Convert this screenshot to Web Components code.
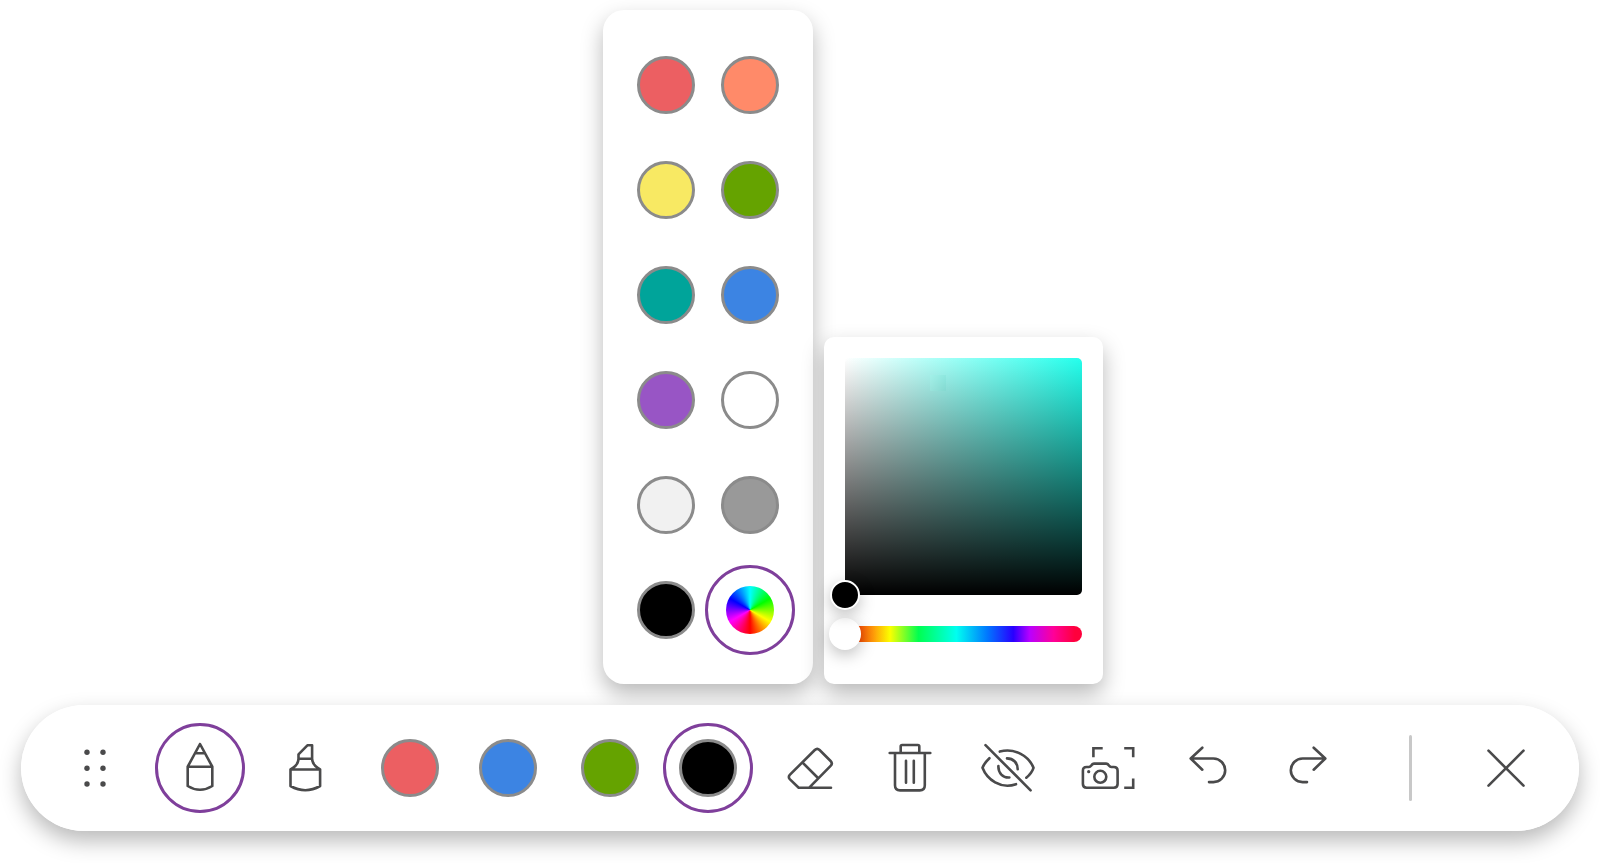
<!DOCTYPE html>
<html lang="en">
<head>
<meta charset="utf-8">
<title>Ink toolbar</title>
<style>
    body {
        margin: 0;
        background: #fff;
        font-family: "Liberation Sans", sans-serif;
    }
</style>
</head>
<body>
<ink-app></ink-app>

<script>
const ICONS = {
    grip: `<g fill="currentColor" stroke="none">
        <circle cx="-8" cy="-15.7" r="2.7"/><circle cx="8" cy="-15.7" r="2.7"/>
        <circle cx="-8" cy="0.2" r="2.7"/><circle cx="8" cy="0.2" r="2.7"/>
        <circle cx="-8" cy="16" r="2.7"/><circle cx="8" cy="16" r="2.7"/></g>`,
    pen: '<path d="M0-24L-12.3-1.3V18Q0 25.6 12.3 18V-1.3ZM-12.3-1.3H12.3M-4.7-14.8H4.7"/>',
    marker: '<path d="M-6.5-9.2V-13.7L2.4-22.7H7.1V-9.2ZM-6.5-9.2C-6.5-5-9-1.5-14.5 1.3V18Q0.3 26.4 15.1 18V1.3C10 -1.5 7.1-5 7.1-9.2M-14.5 1.5H15.1"/>',
    eraser: '<path d="M21 19.7H-11.3L-20 11.4Q-22.4 9-20 6.6L4.8-18Q7.2-20.3 9.6-18L20.6-7Q23-4.6 20.6-2.2L-.5 19.4M-7.2-5.2L8 10"/>',
    trash: '<path d="M-20.3-15H20.3M-9.3-15.5V-21.5Q-9.3-23-7.8-23H7.8Q9.3-23 9.3-21.5V-15.5M-15-14.5V17.3Q-15 22.4-10 22.4H9.8Q14.8 22.4 14.8 17.3V-14.5M-4-7.3V14.7M3.8-7.3V14.7"/>',
    hide: `<path d="M-22.5-22.8L22.6 22.3M-8.2-16.4C7-20.5 21-11.5 25.5-.2C24.5 3 21.5 7 18.3 9.7
        M-18.6-9.8C-22-6.5-24.5-3-25.5-.2C-21 11.5-7.5 21.5 8 16.2M-1-9.6C5.5-9.6 9.7-5 9.7 1.2M-9.6-2C-10 5 -5 10 1.4 9.5"/>`,
    capture: `<path stroke-linecap="butt" stroke-linejoin="miter" d="M-14.6-10.7V-19.8H-5.3M16.2-19.8H25.2V-10.7M25.2 10.6V19.7H16.2"/>
        <path d="M-21.3-1H-19Q-17.8-1-17-2.2Q-15.8-4.4-14-4.4H-1.8Q0-4.4 1.2-2.2Q2-1 3.2-1H5.8Q9.6-1 9.6 2.8V16Q9.6 19.7 5.8 19.7H-21.3Q-25.1 19.7-25.1 16V2.8Q-25.1-1-21.3-1Z"/>
        <circle cx="-7.7" cy="8.8" r="6"/><circle cx="-19.3" cy="3.7" r="1.6" fill="currentColor" stroke="none"/>`,
    undo: '<path d="M-5.7-20.3L-17.3-9.5L-5.7 1.7M-17-9.5H5.4A11.8 11.8 0 0 1 5.4 14.1H1"/>',
    redo: '<path d="M5.7-20.3L17.3-9.5L5.7 1.7M17-9.5H-5.4A11.8 11.8 0 0 0-5.4 14.1H-1"/>',
    close: '<path d="M-17.5-17.3L17.5 17.7M17.5-17.3L-17.5 17.7"/>'
};

class InkApp extends HTMLElement {
    constructor() {
        super();
        this.attachShadow({ mode: 'open' });
        this.shadowRoot.innerHTML = `
            <style>
                :host {
                    display: flex;
                    flex-direction: column;
                    gap: 21px;
                    padding: 10px 21px 32px;
                    --ink: #4a4a4b;
                    --accent: #7f3f9b;
                    --outline: #8b8b8b;
                    --shadow: 0 10px 22px rgba(0,0,0,0.28);
                }
                .popups {
                    display: flex;
                    align-items: flex-end;
                    gap: 11px;
                    padding-left: 582px;
                }
            </style>
            <div class="popups">
                <ink-palette></ink-palette>
                <ink-picker></ink-picker>
            </div>
            <ink-toolbar>
                <ink-group class="wide">
                    <ink-icon name="grip" label="Move toolbar"></ink-icon>
                    <ink-icon name="pen" label="Pen" selected></ink-icon>
                    <ink-icon name="marker" label="Highlighter"></ink-icon>
                </ink-group>
                <ink-group class="pens">
                    <ink-group>
                        <ink-swatch color="#ec5f62" label="Red"></ink-swatch>
                        <ink-swatch color="#3c84e3" label="Blue"></ink-swatch>
                    </ink-group>
                    <ink-group>
                        <ink-swatch color="#65a300" label="Green"></ink-swatch>
                        <ink-swatch color="#000" label="Black" selected></ink-swatch>
                    </ink-group>
                </ink-group>
                <ink-group class="actions">
                    <ink-icon name="eraser" label="Eraser"></ink-icon>
                    <ink-group>
                        <ink-icon name="trash" label="Delete all"></ink-icon>
                        <ink-icon name="hide" label="Hide ink"></ink-icon>
                    </ink-group>
                    <ink-icon name="capture" label="Capture"></ink-icon>
                    <ink-icon name="undo" label="Undo"></ink-icon>
                    <ink-icon name="redo" label="Redo"></ink-icon>
                </ink-group>
                <ink-group class="wide" slot="end">
                    <ink-icon name="close" label="Close"></ink-icon>
                </ink-group>
            </ink-toolbar>
        `;
    }
}

class InkToolbar extends HTMLElement {
    constructor() {
        super();
        this.attachShadow({ mode: 'open' });
        this.shadowRoot.innerHTML = `
            <style>
                :host {
                    display: flex;
                    align-items: center;
                    gap: 4px;
                    min-height: 126px;
                    padding: 0 21px;
                    border-radius: 63px;
                    background: rgba(255,255,255,0.93);
                    box-shadow: var(--shadow);
                    position: relative;
                }
                .end {
                    display: flex;
                    align-items: center;
                    gap: 41px;
                    margin-left: auto;
                }
                .divider {
                    width: 3px;
                    height: 66px;
                    border-radius: 2px;
                    background: #c8c8c8;
                }
            </style>
            <slot></slot>
            <div class="end">
                <div class="divider"></div>
                <slot name="end"></slot>
            </div>
        `;
    }
}

class InkGroup extends HTMLElement {
    constructor() {
        super();
        this.attachShadow({ mode: 'open' });
        this.shadowRoot.innerHTML = `
            <style>
                :host {
                    display: flex;
                    align-items: center;
                }
                :host(.wide) { --cell: 105px; }
                :host(.pens) { gap: 4px; }
                :host(.actions) { gap: 2px; }
            </style>
            <slot></slot>
        `;
    }
}

// shared by icon buttons and colour swatches
const BUTTON_STYLE = `
    :host {
        display: flex;
        justify-content: center;
        align-items: center;
        width: var(--cell, 98px);
    }
    button {
        display: flex;
        flex: none;
        justify-content: center;
        align-items: center;
        box-sizing: border-box;
        width: 90px;
        height: 90px;
        margin: 0 -3px;
        padding: 0;
        border: 3px solid transparent;
        border-radius: 50%;
        background: none;
        color: var(--ink);
        cursor: pointer;
    }
    :host([selected]) button {
        border-color: var(--accent);
    }
`;

class InkIcon extends HTMLElement {
    constructor() {
        super();
        this.attachShadow({ mode: 'open' });
    }

    connectedCallback() {
        this.shadowRoot.innerHTML = `
            <style>
                ${BUTTON_STYLE}
                svg {
                    width: 54px;
                    height: 54px;
                    fill: none;
                    stroke: currentColor;
                    stroke-width: 2.6;
                    stroke-linecap: round;
                    stroke-linejoin: round;
                }
            </style>
            <button type="button" aria-label="${this.getAttribute('label')}">
                <svg viewBox="-27 -27 54 54" aria-hidden="true">${ICONS[this.getAttribute('name')]}</svg>
            </button>
        `;
    }
}

class InkSwatch extends HTMLElement {
    constructor() {
        super();
        this.attachShadow({ mode: 'open' });
    }

    connectedCallback() {
        this.shadowRoot.innerHTML = `
            <style>
                ${BUTTON_STYLE}
                span {
                    box-sizing: border-box;
                    width: 58px;
                    height: 58px;
                    border: 3px solid var(--outline);
                    border-radius: 50%;
                    background: ${this.getAttribute('color')};
                }
                :host([custom]) span {
                    width: 48px;
                    height: 48px;
                    border: 0;
                    background: conic-gradient(#0ff, #0f0 60deg, #ff0 120deg, #f00 180deg, #f0f 240deg, #00f 300deg, #0ff);
                }
            </style>
            <button type="button" aria-label="${this.getAttribute('label')}"><span></span></button>
        `;
    }
}

class InkPalette extends HTMLElement {
    constructor() {
        super();
        this.attachShadow({ mode: 'open' });
        this.shadowRoot.innerHTML = `
            <style>
                :host {
                    display: grid;
                    grid-template-columns: 84px 84px;
                    grid-auto-rows: 105px;
                    padding: 22px 21px;
                    border-radius: 21px;
                    background: #fff;
                    box-shadow: var(--shadow);
                    --cell: 84px;
                }
            </style>
            <ink-swatch color="#ec5f62" label="Red"></ink-swatch>
            <ink-swatch color="#ff8a69" label="Orange"></ink-swatch>
            <ink-swatch color="#f8e963" label="Yellow"></ink-swatch>
            <ink-swatch color="#65a300" label="Green"></ink-swatch>
            <ink-swatch color="#00a49a" label="Teal"></ink-swatch>
            <ink-swatch color="#3c84e3" label="Blue"></ink-swatch>
            <ink-swatch color="#9855c5" label="Purple"></ink-swatch>
            <ink-swatch color="#fff" label="White"></ink-swatch>
            <ink-swatch color="#f1f1f1" label="Light gray"></ink-swatch>
            <ink-swatch color="#999" label="Gray"></ink-swatch>
            <ink-swatch color="#000" label="Black"></ink-swatch>
            <ink-swatch custom label="Custom color" selected></ink-swatch>
        `;
    }
}

class InkPicker extends HTMLElement {
    constructor() {
        super();
        this.attachShadow({ mode: 'open' });
        this.shadowRoot.innerHTML = `
            <style>
                :host {
                    display: flex;
                    flex-direction: column;
                    gap: 31px;
                    width: 237px;
                    padding: 21px 21px 42px;
                    border-radius: 10px;
                    background: #fff;
                    box-shadow: var(--shadow);
                }
                .area {
                    position: relative;
                    aspect-ratio: 1;
                    border-radius: 5px;
                    background:
                        linear-gradient(to top, #000, transparent),
                        linear-gradient(to right, #fff, #24ffec);
                }
                .sample {
                    position: absolute;
                    left: 36%;
                    top: 7%;
                    width: 16px;
                    height: 16px;
                    background: linear-gradient(to right, rgba(160,255,240,0.2), rgba(60,190,170,0.1));
                }
                .thumb {
                    position: absolute;
                    left: -15px;
                    bottom: -15px;
                    box-sizing: border-box;
                    width: 30px;
                    height: 30px;
                    border: 2px solid #fff;
                    border-radius: 50%;
                    background: #000;
                    box-shadow: 0 5px 16px rgba(0,0,0,0.25);
                }
                .hue {
                    display: flex;
                    height: 16px;
                    border-radius: 8px;
                    background: linear-gradient(to right, #e00, #ff9b0a 12%, #fbff00 19%, #00ff50 31%, #00fff0 47%, #0078ff 60%, #2800ff 71%, #b900ff 78%, #ff0098 88%, #ff003c 97%);
                }
                input {
                    flex: 1;
                    appearance: none;
                    height: 16px;
                    margin: 0 -16px;
                    background: none;
                }
                input::-webkit-slider-thumb {
                    appearance: none;
                    width: 32px;
                    height: 32px;
                    border-radius: 50%;
                    background: #fff;
                    box-shadow: 0 5px 16px rgba(0,0,0,0.25);
                }
            </style>
            <div class="area">
                <div class="sample"></div>
                <div class="thumb"></div>
            </div>
            <div class="hue">
                <input type="range" min="0" max="360" value="0" aria-label="Hue">
            </div>
        `;
    }
}

customElements.define('ink-group', InkGroup);
customElements.define('ink-icon', InkIcon);
customElements.define('ink-swatch', InkSwatch);
customElements.define('ink-toolbar', InkToolbar);
customElements.define('ink-palette', InkPalette);
customElements.define('ink-picker', InkPicker);
customElements.define('ink-app', InkApp);
</script>
</body>
</html>
